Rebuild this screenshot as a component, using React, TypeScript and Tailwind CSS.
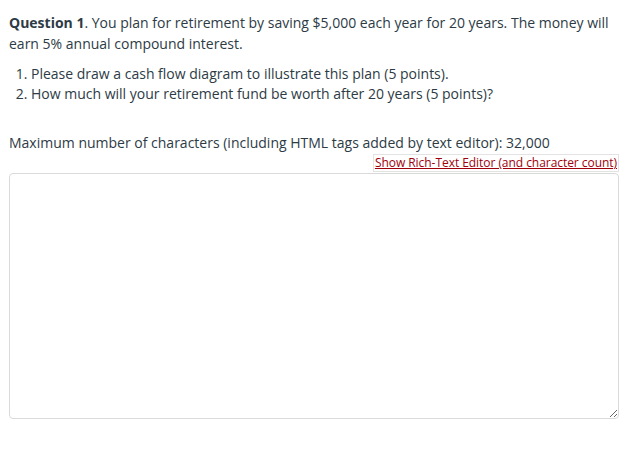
export default function App() {
  return (
    <div className="min-h-screen bg-white text-[14px] text-[#2d3b45] font-['Open_Sans',sans-serif]">
      <div className="w-[610px] ml-[9px] pt-[12px]">
        <p className="leading-[21px]">
          <strong className="font-bold">Question 1</strong>. You plan for retirement by saving $5,000 each year for 20 years. The money will
          earn 5% annual compound interest.
        </p>
        <ol className="list-decimal pl-[22px] mt-[10px] leading-[20px]">
          <li>Please draw a cash flow diagram to illustrate this plan (5 points).</li>
          <li>How much will your retirement fund be worth after 20 years (5 points)?</li>
        </ol>
        <p className="mt-[29px] leading-[20px]">
          Maximum number of characters (including HTML tags added by text editor): 32,000
        </p>
        <div className="flex justify-end mt-px">
          <a
            href="#"
            className="text-[12px] leading-[16px] tracking-[-0.05px] text-[#a0000b] underline border border-[#e3e3e3] px-px"
          >
            Show Rich-Text Editor (and character count)
          </a>
        </div>
        <textarea className="block w-full h-[246px] mt-px border border-[#dadada] rounded-[4px] resize-y outline-none" />
      </div>
    </div>
  );
}
